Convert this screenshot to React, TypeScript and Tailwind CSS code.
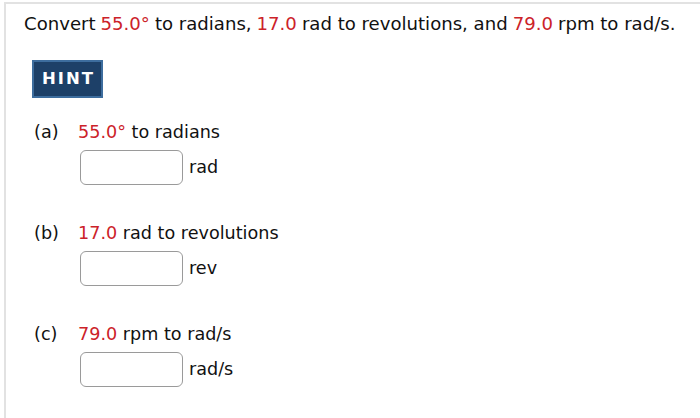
const RED = 'text-[#cc2229]';

function Part({ letter, value, rest, unit }: { letter: string; value: string; rest: string; unit: string }) {
  return (
    <div className="mb-[36px]">
      <div className="flex items-center h-[24px]">
        <span className="w-[44px]">({letter})</span>
        <span>
          <span className={RED}>{value}</span>
          {rest}
        </span>
      </div>
      <div className="flex items-center mt-[6px] ml-[46px]">
        <input
          type="text"
          className="w-[103px] h-[35px] rounded-[6px] border border-[#9a9a9a] bg-white outline-none"
        />
        <span className="ml-[6px]">{unit}</span>
      </div>
    </div>
  );
}

export default function App() {
  return (
    <div className="w-[700px] h-[418px] bg-white overflow-hidden pt-[2px] pl-[4px]">
      <div
        className="h-full border-l-2 border-t-2 border-[#e2e2e2] pl-[18px] pt-[8px] text-[#111] text-[17.6px]"
        style={{ fontFamily: '"DejaVu Sans", Verdana, sans-serif' }}
      >
        <p className="h-[24px] flex items-center text-[18.1px] whitespace-nowrap">
          Convert <span className={`${RED} mx-[5px]`}>55.0°</span>to radians,{' '}
          <span className={`${RED} mx-[5px]`}>17.0</span>rad to revolutions, and{' '}
          <span className={`${RED} mx-[5px]`}>79.0</span>rpm to rad/s.
        </p>
        <div className="mt-[24px] ml-[8px]">
          <button className="w-[71px] h-[38px] bg-[#1d4068] border-2 border-[#3d6d9e] text-white font-bold text-[16.5px] tracking-[2px] pl-[2px]">
            HINT
          </button>
        </div>
        <div className="mt-[22px] ml-[10px]">
          <Part letter="a" value="55.0°" rest=" to radians" unit="rad" />
          <Part letter="b" value="17.0" rest=" rad to revolutions" unit="rev" />
          <Part letter="c" value="79.0" rest=" rpm to rad/s" unit="rad/s" />
        </div>
      </div>
    </div>
  );
}
